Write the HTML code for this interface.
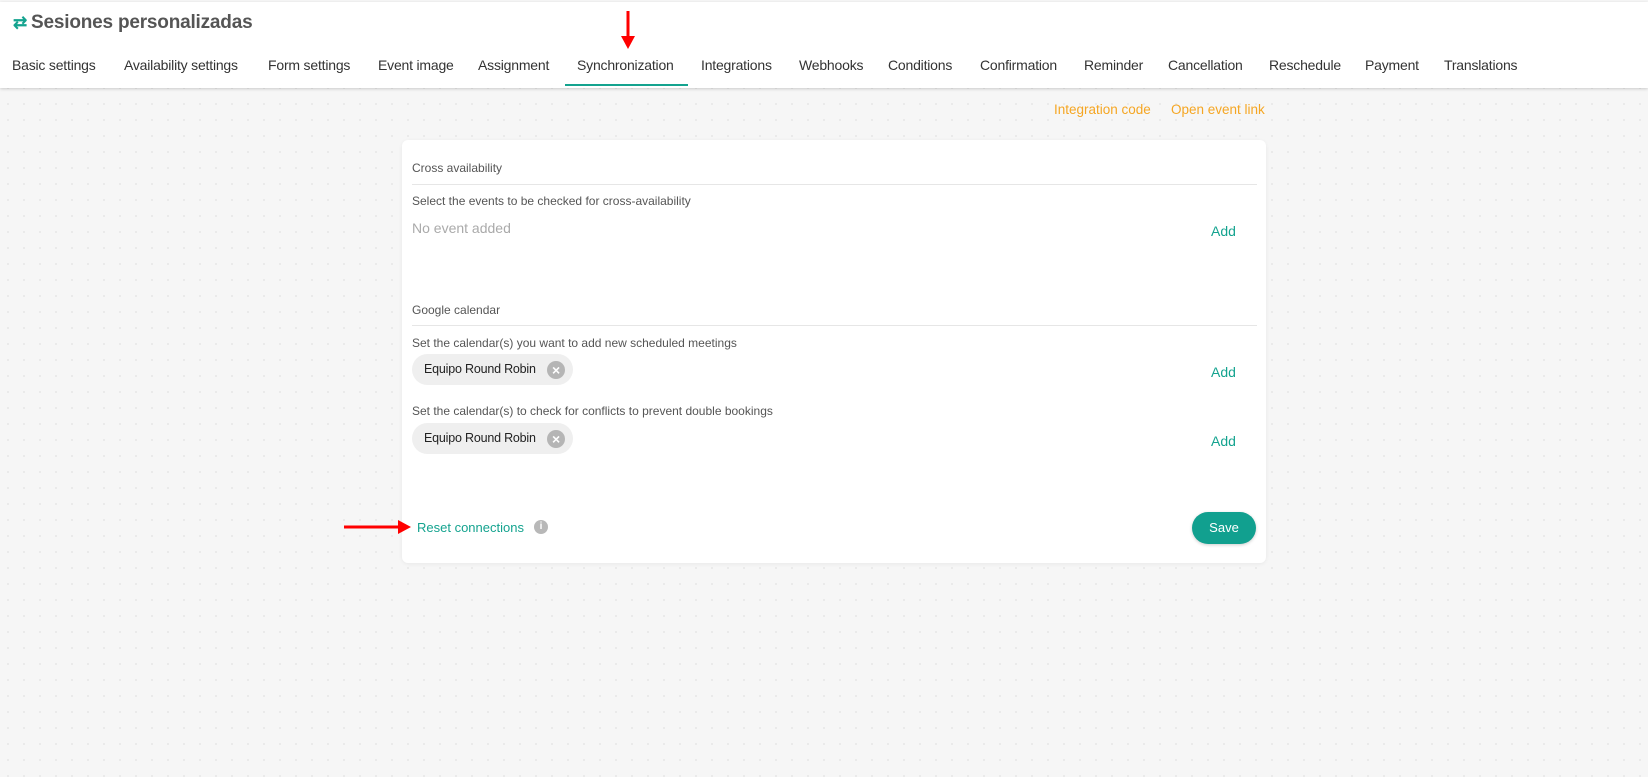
<!DOCTYPE html>
<html><head><style>
*{margin:0;padding:0;box-sizing:border-box}
body{width:1648px;height:777px;overflow:hidden;font-family:"Liberation Sans",Roboto,sans-serif;background-color:#f6f6f6;background-image:radial-gradient(#e6e6e6 1px,transparent 1px);background-size:16px 16px;position:relative;color:#333}
.hdr{position:absolute;left:0;top:2px;width:1648px;height:86px;background:#fff;box-shadow:0 1px 3px rgba(0,0,0,.18)}
.title{position:absolute;left:13px;top:10px;font-size:19px;color:#555;font-weight:bold;letter-spacing:-0.2px}
.title span{color:#14a38f;font-size:17px;margin-right:4px}
.tab{position:absolute;top:55px;font-size:14px;color:#333;white-space:nowrap;letter-spacing:-0.2px}
.ul{position:absolute;left:565px;width:123px;top:82px;height:2px;background:#14a38f}
.a{position:absolute;font-size:13.5px;white-space:nowrap}
.card{position:absolute;left:402px;top:140px;width:864px;height:423px;background:#fff;border-radius:6px;box-shadow:0 1px 4px rgba(0,0,0,.06)}
.line{position:absolute;left:412px;width:845px;height:1px;background:#e6e6e6}
.chip{position:absolute;left:412px;width:161px;height:31px;border-radius:16px;background:#efefef;font-size:12.5px;color:#222;padding:8px 0 0 12px;letter-spacing:-0.2px}
.x{position:absolute;right:8px;top:7px;width:18px;height:18px;border-radius:50%;background:#b5b5b5;color:#fff;font-size:14px;line-height:18px;text-align:center;font-weight:bold}
.add{color:#14a38f;font-size:14px}
.s{font-size:12px;color:#555}
</style></head><body>
<div class="hdr">
<div class="title"><span>⇄</span>Sesiones personalizadas</div>
<div class="tab" style="left:12px">Basic settings</div>
<div class="tab" style="left:124px">Availability settings</div>
<div class="tab" style="left:268px">Form settings</div>
<div class="tab" style="left:378px">Event image</div>
<div class="tab" style="left:478px">Assignment</div>
<div class="tab" style="left:577px">Synchronization</div>
<div class="tab" style="left:701px">Integrations</div>
<div class="tab" style="left:799px">Webhooks</div>
<div class="tab" style="left:888px">Conditions</div>
<div class="tab" style="left:980px">Confirmation</div>
<div class="tab" style="left:1084px">Reminder</div>
<div class="tab" style="left:1168px">Cancellation</div>
<div class="tab" style="left:1269px">Reschedule</div>
<div class="tab" style="left:1365px">Payment</div>
<div class="tab" style="left:1444px">Translations</div>
<div class="ul"></div>
</div>
<svg style="position:absolute;left:620px;top:11px" width="16" height="40"><line x1="8" y1="0" x2="8" y2="28" stroke="#f00" stroke-width="3"/><path d="M1 25 L8 38 L15 25 Z" fill="#f00"/></svg>
<div class="a" style="left:1054px;top:102px;color:#f5a623">Integration code</div>
<div class="a" style="left:1171px;top:102px;color:#f5a623">Open event link</div>
<div class="card"></div>
<div class="a s" style="left:412px;top:161px">Cross availability</div>
<div class="line" style="top:184px"></div>
<div class="a s" style="left:412px;top:194px">Select the events to be checked for cross-availability</div>
<div class="a" style="left:412px;top:220px;font-size:14px;color:#aaa">No event added</div>
<div class="a add" style="left:1211px;top:223px">Add</div>
<div class="a s" style="left:412px;top:303px">Google calendar</div>
<div class="line" style="top:325px"></div>
<div class="a s" style="left:412px;top:336px">Set the calendar(s) you want to add new scheduled meetings</div>
<div class="chip" style="top:354px">Equipo Round Robin<div class="x">×</div></div>
<div class="a add" style="left:1211px;top:364px">Add</div>
<div class="a s" style="left:412px;top:404px">Set the calendar(s) to check for conflicts to prevent double bookings</div>
<div class="chip" style="top:423px">Equipo Round Robin<div class="x">×</div></div>
<div class="a add" style="left:1211px;top:433px">Add</div>
<div class="a" style="left:417px;top:520px;font-size:13px;color:#14a38f">Reset connections</div>
<div style="position:absolute;left:534px;top:520px;width:14px;height:14px;border-radius:50%;background:#b8b8b8;color:#fff;font-size:10px;text-align:center;line-height:14px;font-weight:bold">i</div>
<div style="position:absolute;left:1192px;top:512px;width:64px;height:32px;border-radius:16px;background:#11a08f;color:#fff;font-size:13px;text-align:center;line-height:32px;box-shadow:0 1px 3px rgba(0,0,0,.2)">Save</div>
<svg style="position:absolute;left:344px;top:519px" width="70" height="16"><line x1="0" y1="8" x2="58" y2="8" stroke="#f00" stroke-width="3"/><path d="M54 1 L67 8 L54 15 Z" fill="#f00"/></svg>
</body></html>
